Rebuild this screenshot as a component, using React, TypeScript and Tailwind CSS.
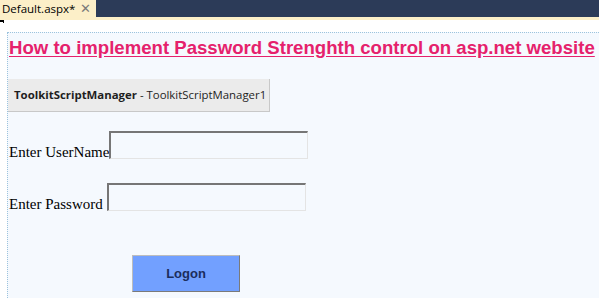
import React from 'react';

function App() {
  return (
    <div className="w-[599px] h-[298px] overflow-hidden bg-white relative">
      {/* 탭 영역 */}
      <div className="h-[17px] bg-[#2c3b58] flex">
        <div className="w-[96px] h-full bg-[#fcefc8] flex items-center pl-[2px] font-['Open_Sans',sans-serif] text-[11.5px] text-black leading-none">
          <span>Default.aspx*</span>
          <span className="ml-auto mr-[5px] text-[#7a7a7a] text-[13px]">✕</span>
        </div>
      </div>
      <div className="h-[3px] bg-[#fcefc8]"></div>
      <div className="relative h-[12px]">
        <div className="absolute left-0 top-0 w-[4px] h-[2px] bg-black"></div>
        <div className="absolute left-[3px] top-0 w-[1px] h-[3px] bg-black"></div>
      </div>

      {/* 디자이너 영역 */}
      <div className="ml-[7px] h-[300px] border-t border-l border-dotted border-[#9cc3dd] bg-[#f5f9fe] pl-[1px]">
        <div className="pt-[4px] font-['Liberation_Sans',Arial,sans-serif] font-bold text-[18.6px] leading-[21px] text-[#e5216c] underline underline-offset-[2px] whitespace-nowrap">
          How to implement Password Strenghth control on asp.net website
        </div>

        <div className="mt-[21px] -ml-[1px] w-[262px] h-[33px] bg-[#ebebeb] border-r border-b border-[#c8c8c8] flex items-center pl-[6px] font-['Open_Sans',sans-serif] text-[11.4px] text-[#1e1e1e] whitespace-nowrap">
          <span className="font-bold">ToolkitScriptManager</span>
          <span>&nbsp;- ToolkitScriptManager1</span>
        </div>

        <div className="font-['Liberation_Serif','Times_New_Roman',serif] text-[15px] text-black">
          <div className="mt-[19px] flex items-end whitespace-nowrap">
            <span className="leading-[13px]">Enter UserName</span>
            <input
              type="text"
              className="w-[199px] h-[28px] border-t-2 border-l-2 border-r border-b border-t-[#767676] border-l-[#767676] border-r-[#e4e4e4] border-b-[#e4e4e4] bg-[#f5f9fe]"
            />
          </div>
          <div className="mt-[24px] flex items-end whitespace-nowrap">
            <span className="leading-[13px]">Enter Password&nbsp;</span>
            <input
              type="password"
              className="w-[199px] h-[28px] border-t-2 border-l-2 border-r border-b border-t-[#767676] border-l-[#767676] border-r-[#e4e4e4] border-b-[#e4e4e4] bg-[#f5f9fe]"
            />
          </div>
          <div className="mt-[44px] pl-[123px]">
            <button className="w-[108px] h-[37px] bg-[#72a0ff] border border-t-[#bdbdbd] border-l-[#bdbdbd] border-r-[#7a7a7a] border-b-[#7a7a7a] font-['Liberation_Sans',Arial,sans-serif] font-bold text-[13px] text-[#1b2d5c]">
              Logon
            </button>
          </div>
        </div>
      </div>
    </div>
  );
}

export default App;
